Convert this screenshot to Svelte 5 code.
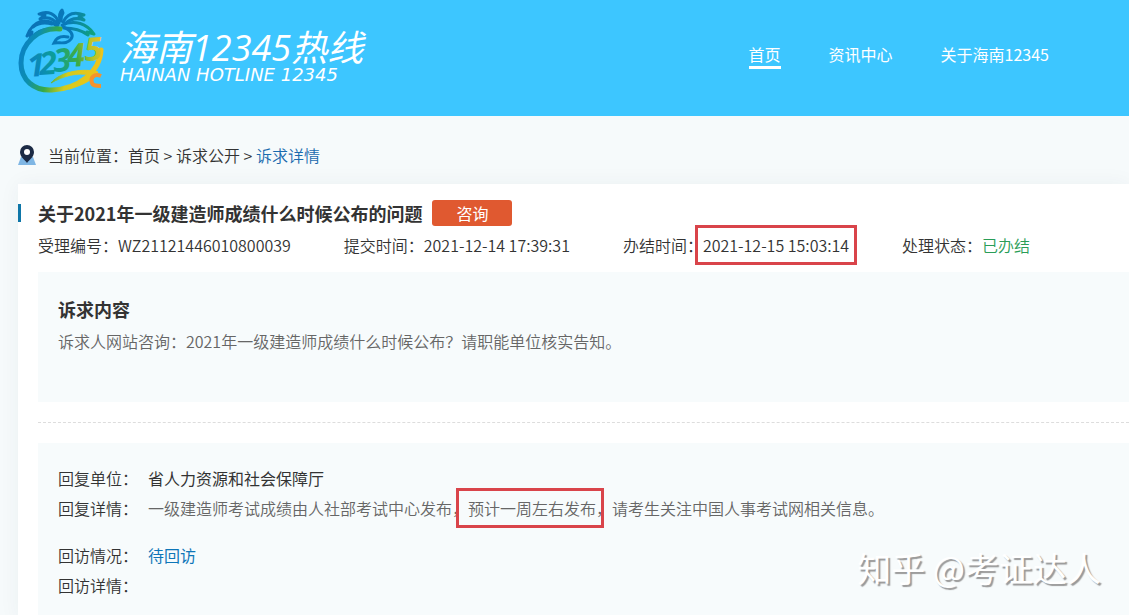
<svelte:options runes />
<script lang="ts">
  interface NavItem {
    label: string;
    href: string;
    active?: boolean;
  }

  const navItems: NavItem[] = [
    { label: '首页', href: '#home', active: true },
    { label: '资讯中心', href: '#news' },
    { label: '关于海南12345', href: '#about' },
  ];
</script>

<div class="page">
  <header class="header">
    <a class="brand" href="#home">
      <svg class="brand-logo" width="90" height="90" viewBox="0 0 90 90" fill="none" aria-hidden="true">
        <defs>
          <linearGradient id="ring" x1="2" y1="40" x2="88" y2="62" gradientUnits="userSpaceOnUse">
            <stop offset="0" stop-color="#0a7fc8" />
            <stop offset="0.2" stop-color="#0c8fae" />
            <stop offset="0.4" stop-color="#35a94a" />
            <stop offset="0.62" stop-color="#d3cb1c" />
            <stop offset="1" stop-color="#f2c21c" />
          </linearGradient>
          <linearGradient id="leaf" x1="8" y1="10" x2="78" y2="26" gradientUnits="userSpaceOnUse">
            <stop offset="0" stop-color="#0b70b4" />
            <stop offset="0.6" stop-color="#0879ba" />
            <stop offset="1" stop-color="#10a37c" />
          </linearGradient>
          <linearGradient id="digits" x1="14" y1="60" x2="88" y2="40" gradientUnits="userSpaceOnUse">
            <stop offset="0" stop-color="#0a80c4" />
            <stop offset="0.35" stop-color="#0d9f95" />
            <stop offset="0.62" stop-color="#3cab45" />
            <stop offset="0.82" stop-color="#b5c428" />
            <stop offset="1" stop-color="#e8bf26" />
          </linearGradient>
        </defs>
        <!-- Palm crown -->
        <g stroke="url(#leaf)" stroke-width="3" stroke-linejoin="round" stroke-linecap="round">
          <path d="M43 17C40 8 32 4 23 8l6 1-5 4c8-3 14 0 18 6" />
          <path d="M44 14c-1-4-1-7 2-10l1 3c-2 3-2 5-2 8" />
          <path d="M47 16c4-8 11-11 21-7l-5 1 5 4c-8-3-14-1-19 4" />
          <path d="M41 20C30 11 17 14 11 30l5-4-2 7c7-8 15-11 24-10" />
          <path d="M36 18c-7-2-14-1-19 3" />
          <path d="M46 19c13-6 25-1 32 9l-7-2 1 3c-8-6-16-7-24-7" />
        </g>
        <path d="M47 21c8 3 11 8 8 12-4 6-11 3-17 4 3-7 9-7 14-6" stroke="#0879ba" stroke-width="3" stroke-linecap="round" />
        <!-- Trunk running into the ring -->
        <path d="M44 23C22 21 5 38 5 57c0 17 13 28 31 27 26-1 48-18 49-40" stroke="url(#ring)" stroke-width="5" stroke-linecap="round" />
        <path d="M35 77c12-7 27-11 39-8-7 7-14 11-21 14 14-4 24-9 29-17-14-4-37-1-47 11z" fill="url(#ring)" stroke="url(#ring)" stroke-width="1" />
        <path d="M85 70c-7-3-11 2-9 7 1 3 5 3 9 3" stroke="#f5932c" stroke-width="4" />
        <text class="brand-digits" x="12 24 38 52 69" y="71 69 66 61 55" rotate="-4" fill="url(#digits)">12345</text>
      </svg>
      <span class="brand-text">
        <span class="brand-name">海南12345热线</span>
        <span class="brand-sub">HAINAN HOTLINE 12345</span>
      </span>
    </a>

    <nav class="nav" aria-label="主导航">
      {#each navItems as item (item.href)}
        <a class="nav-link" class:active={item.active} href={item.href} aria-current={item.active ? 'page' : undefined}>
          {item.label}
        </a>
      {/each}
    </nav>
  </header>

  <nav class="crumbs" aria-label="当前位置">
    <svg width="18" height="22" viewBox="0 0 18 22" aria-hidden="true">
      <path d="M3 13h12l3 8H0z" fill="#7fb6e4" />
      <path d="M9 1a7 7 0 0 0-7 7c0 5 5 8 7 11 2-3 7-6 7-11a7 7 0 0 0-7-7z" fill="#1c2b45" />
      <circle cx="9" cy="8" r="3" fill="#fff" />
    </svg>
    <span class="crumb-path">当前位置：<a href="#home">首页</a> &gt; <a href="#open">诉求公开</a> &gt; <a class="current" href="#detail" aria-current="page">诉求详情</a></span>
  </nav>

  <main class="card">
    <div class="title-row">
      <h1>关于2021年一级建造师成绩什么时候公布的问题</h1>
      <span class="tag">咨询</span>
    </div>

    <div class="meta">
      <span>受理编号：WZ21121446010800039</span>
      <span>提交时间：2021-12-14 17:39:31</span>
      <span>办结时间：<span class="mark">2021-12-15 15:03:14</span></span>
      <span>处理状态：<span class="done">已办结</span></span>
    </div>

    <section class="panel appeal">
      <h2>诉求内容</h2>
      <p>诉求人网站咨询：2021年一级建造师成绩什么时候公布？请职能单位核实告知。</p>
    </section>

    <hr />

    <section class="panel reply">
      <dl>
        <div class="row">
          <dt>回复单位：</dt>
          <dd class="unit">省人力资源和社会保障厅</dd>
        </div>
        <div class="row row-detail">
          <dt>回复详情：</dt>
          <dd>一级建造师考试成绩由人社部考试中心发布，<span class="mark mark-wide">预计一周左右发布</span>，请考生关注中国人事考试网相关信息。</dd>
        </div>
        <div class="row">
          <dt>回访情况：</dt>
          <dd class="visit">待回访</dd>
        </div>
        <div class="row">
          <dt>回访详情：</dt>
          <dd></dd>
        </div>
      </dl>
    </section>
  </main>

  <div class="watermark">知乎 @考证达人</div>
</div>

<style>
  :global(body) {
    background: #f6fafb;
  }

  .page {
    position: relative;
    display: flex;
    flex-direction: column;
    min-height: 100vh;
    font-family: 'Noto Sans CJK SC', sans-serif;
    font-size: 16px;
    font-weight: 350;
    line-height: 30px;
    color: #333;
    overflow: hidden;
  }

  a {
    color: inherit;
    text-decoration: none;
  }

  .header {
    display: flex;
    align-items: flex-start;
    justify-content: space-between;
    height: 116px;
    padding: 0 80px 0 16px;
    box-sizing: border-box;
    background: #3dc6ff;
    color: #fff;
  }

  .brand {
    display: flex;
    gap: 14px;
    padding-top: 6px;
  }

  .brand-digits {
    font-family: 'Open Sans', sans-serif;
    font-size: 32px;
    font-weight: 700;
    font-style: italic;
  }

  .brand-text {
    display: flex;
    flex-direction: column;
    padding-top: 22px;
    font-style: italic;
    white-space: nowrap;
  }

  .brand-name {
    font-family: 'Open Sans', 'Noto Sans CJK SC', sans-serif;
    font-size: 36px;
    font-weight: 400;
    line-height: 40px;
  }

  .brand-sub {
    font-family: 'DejaVu Sans', sans-serif;
    font-size: 18px;
    font-weight: 400;
    line-height: 14px;
  }

  .nav {
    display: flex;
    gap: 48px;
    padding-top: 42px;
    white-space: nowrap;
  }

  .nav-link {
    font-weight: 400;
    line-height: 24px;
    border-bottom: 3px solid transparent;
  }

  .nav-link.active {
    border-bottom-color: #fff;
  }

  .crumbs {
    display: flex;
    align-items: center;
    gap: 12px;
    padding: 24px 18px 14px;
  }

  .current {
    color: #1a6aae;
  }

  .card {
    flex: 1;
    display: flex;
    flex-direction: column;
    margin-left: 18px;
    padding-top: 14px;
    background: #fff;
    box-shadow: 0 0 20px rgba(0, 60, 80, 0.05);
  }

  .title-row {
    display: flex;
    align-items: center;
    gap: 10px;
    height: 30px;
  }

  h1 {
    margin: 0;
    padding-left: 17px;
    border-left: 3px solid #0e76a8;
    font-size: 18px;
    font-weight: 700;
    line-height: 18px;
    white-space: nowrap;
  }

  .tag {
    width: 80px;
    border-radius: 3px;
    background: #e05930;
    color: #fff;
    font-weight: 400;
    line-height: 26px;
    text-align: center;
  }

  .meta {
    display: flex;
    gap: 53px;
    padding: 2px 20px 12px;
    white-space: nowrap;
  }

  .done {
    color: #2a9d57;
  }

  /* Red frame round a highlighted phrase */
  .mark {
    position: relative;
  }

  .mark::after {
    content: '';
    position: absolute;
    inset: -8px;
    border: 3px solid #d9444a;
  }

  .mark-wide::after {
    left: -12px;
  }

  .panel {
    margin-left: 20px;
    padding: 20px;
    background: #f7fbfc;
  }

  .appeal {
    min-height: 90px;
  }

  h2 {
    margin: 2px 0;
    font-size: 18px;
    font-weight: 700;
    line-height: 30px;
  }

  p {
    margin: 0;
    color: #666;
  }

  hr {
    align-self: stretch;
    margin: 20px 0 20px 20px;
    border: 0;
    border-top: 1px dashed #ddd;
  }

  .reply {
    flex: 1;
  }

  dl {
    margin: 0;
  }

  .row {
    display: flex;
    gap: 10px;
  }

  .row-detail {
    margin-bottom: 17px;
  }

  dd {
    margin: 0;
    color: #666;
  }

  .unit {
    color: #333;
    font-weight: 400;
  }

  .visit {
    color: #0e76b8;
    font-weight: 400;
  }

  .watermark {
    position: absolute;
    right: 28px;
    bottom: 30px;
    font-size: 34px;
    font-weight: 400;
    line-height: 44px;
    color: #fff;
    text-shadow: 2px 2px 1px #999;
    white-space: nowrap;
  }
</style>
